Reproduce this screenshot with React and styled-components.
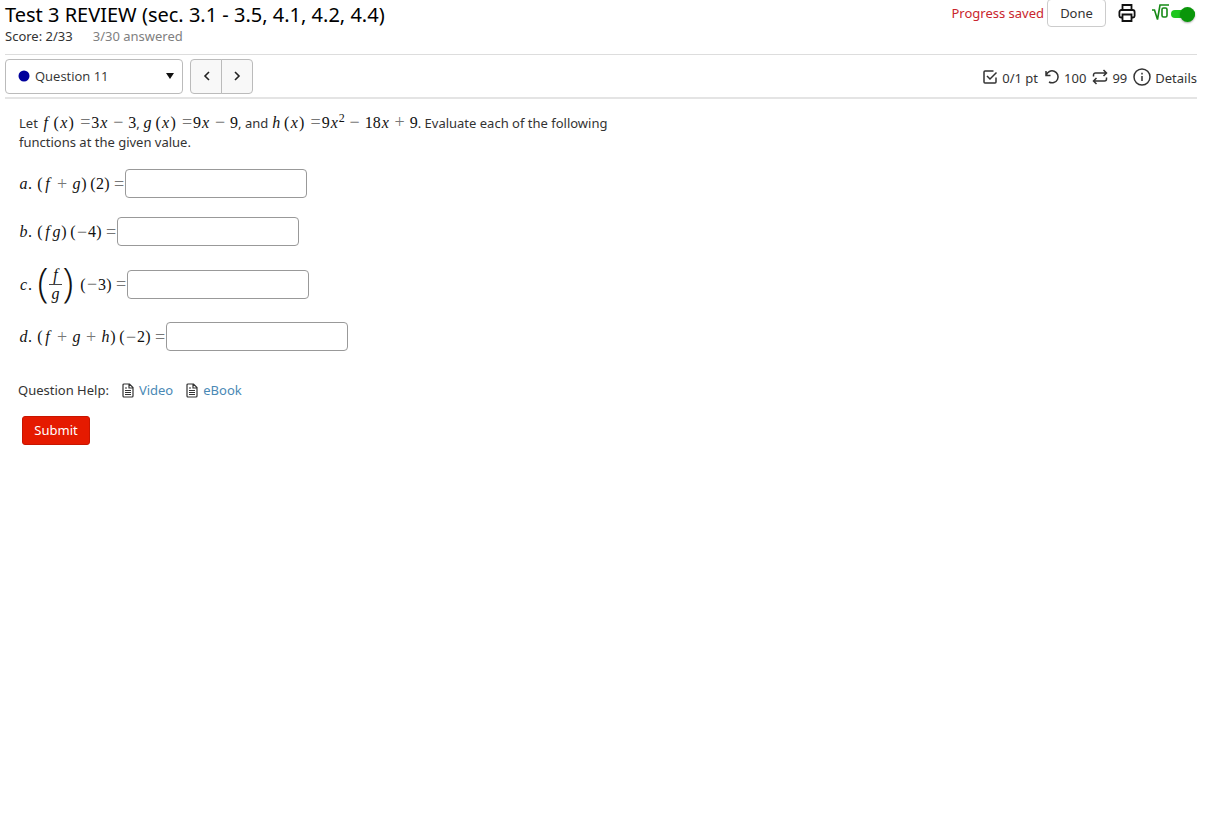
import React from "react";
import styled, { createGlobalStyle } from "styled-components";

const GlobalStyle = createGlobalStyle`
  *, *::before, *::after { box-sizing: border-box; }
  body {
    margin: 0;
    background: #fff;
    color: #333;
    font: 13px/19px "Noto Sans", "Open Sans", sans-serif;
  }
  button, input, select { font: inherit; color: inherit; }
`;

const Page = styled.div`
  padding: 0 12px 0 5px;
`;

const Header = styled.header`
  display: flex;
  justify-content: space-between;
  align-items: flex-start;
  height: 54px;
`;

const Title = styled.h1`
  margin: 0;
  padding-top: 2px;
  font-size: 20px;
  line-height: 26px;
  font-weight: 400;
  color: #000;
`;

const Scores = styled.div`
  display: flex;
  gap: 20px;
  line-height: 17px;
`;

const Answered = styled.span`
  color: #808080;
`;

const HeaderTools = styled.div`
  display: flex;
  align-items: center;
  height: 26px;
`;

const Saved = styled.span`
  margin-right: 3px;
  color: #c9252d;
`;

const DoneButton = styled.button`
  width: 59px;
  height: 28px;
  padding: 0;
  border: 1px solid #ccc;
  border-radius: 4px;
  background: #fff;
`;

const IconButton = styled.button`
  display: flex;
  margin-left: 12px;
  padding: 0;
  border: 0;
  background: none;
  color: #111;
`;

const MathToggle = styled.label`
  display: flex;
  align-items: center;
  gap: 2px;
  margin: 0 2px 0 16px;
`;

const Switch = styled.input`
  appearance: none;
  display: flex;
  align-items: center;
  justify-content: flex-end;
  width: 24px;
  height: 8px;
  margin: 2px 0 0;
  border-radius: 4px;
  background: #1fc71f;
  &::before {
    content: "";
    width: 15px;
    height: 15px;
    flex: none;
    border-radius: 50%;
    background: #0a960a;
    box-shadow: 0 1px 2px #0005;
  }
`;

const Toolbar = styled.nav`
  display: flex;
  justify-content: space-between;
  align-items: center;
  height: 45px;
  border-top: 1px solid #ddd;
  border-bottom: 2px solid #e4e4e4;
`;

const Group = styled.div`
  display: flex;
  align-items: center;
`;

const QuestionPicker = styled.label`
  display: flex;
  align-items: center;
  gap: 5px;
  width: 178px;
  height: 35px;
  margin-right: 7px;
  padding: 0 8px 0 12px;
  border: 1px solid #bbb;
  border-radius: 4px;
  font-family: "Open Sans", "Noto Sans", sans-serif;
`;

const PickerSelect = styled.select`
  appearance: none;
  flex: 1;
  padding: 0;
  border: 0;
  background: transparent;
`;

const StepButton = styled.button`
  display: flex;
  align-items: center;
  justify-content: center;
  width: 32px;
  height: 35px;
  padding: 0;
  border: 1px solid #bbb;
  background: #f8f8f8;
  border-radius: ${(p) => (p.$side === "left" ? "4px 0 0 4px" : "0 4px 4px 0")};
  margin-left: ${(p) => (p.$side === "left" ? "0" : "-1px")};
`;

const Stats = styled.div`
  display: flex;
  align-items: center;
  gap: 6px;
  padding-top: 4px;
  svg { margin-bottom: 2px; }
`;

const Stat = styled.span`
  display: flex;
  align-items: center;
  gap: 4px;
`;

const DetailsButton = styled.button`
  display: flex;
  align-items: center;
  gap: 4px;
  padding: 0;
  border: 0;
  background: none;
`;

const Question = styled.main`
  padding: 14px;
`;

const Prompt = styled.p`
  max-width: 610px;
  margin: 0 0 17px;
`;

const Answer = styled.div`
  display: flex;
  align-items: center;
  height: ${(p) => (p.$tall ? "38px" : "29px")};
  margin-bottom: 19px;
`;

const AnswerInput = styled.input`
  width: 182px;
  height: 29px;
  padding: 0 8px;
  border: 1px solid #999;
  border-radius: 4px;
  background: #fff;
`;

const Formula = styled.span`
  font-family: "Liberation Serif", serif;
  font-size: 16px;
  line-height: 19px;
  color: #111;
  white-space: nowrap;
`;

const FormulaLabel = styled(Formula).attrs({ as: "label" })`
  display: flex;
  align-items: center;
`;

const Variable = styled.i`
  display: inline-block;
  min-width: 9px;
  text-align: center;
`;

const Paren = styled.span`
  display: inline-block;
  width: 6px;
  text-align: center;
`;

const Operator = styled.span`
  display: inline-block;
  width: 12px;
  margin: 0 ${(p) => (p.$wide ? "4px" : "0")};
  color: #777;
  font-size: 18px;
  line-height: 16px;
  text-align: center;
`;

const Space = styled.span`
  display: inline-block;
  width: ${(p) => (p.$wide ? "5px" : "3px")};
`;

const Power = styled.sup`
  font-size: 12px;
  line-height: 0;
`;

const BigParen = styled.span`
  width: 12px;
  font-family: "Open Sans", sans-serif;
  font-weight: 300;
  font-size: 40px;
  line-height: 32px;
  padding-bottom: 4px;
  text-align: center;
`;

const Fraction = styled.span`
  display: flex;
  flex-direction: column;
  align-items: center;
  width: 13px;
  line-height: 18px;
`;

const Numerator = styled.i`
  align-self: stretch;
  border-bottom: 1px solid #444;
  text-align: center;
`;

const Help = styled.div`
  display: flex;
  align-items: center;
  margin: 30px 0 16px -1px;
`;

const HelpLink = styled.a`
  display: flex;
  align-items: center;
  gap: 5px;
  margin-left: 13px;
  color: #4a89b5;
  text-decoration: none;
`;

const SubmitButton = styled.button`
  width: 68px;
  height: 29px;
  margin-left: 3px;
  padding: 0;
  border: 1px solid #c81500;
  border-radius: 3px;
  background: #e51a00;
  color: #fff;
`;

const Icon = ({ size = 16, children, width = 1.5, box = 16 }) => (
  <svg
    width={size}
    height={size}
    viewBox={`0 0 ${box} ${box}`}
    fill="none"
    stroke="currentColor"
    strokeWidth={width}
    aria-hidden="true"
  >
    {children}
  </svg>
);

const PrintIcon = () => (
  <Icon size={18} box={18} width={1.8}>
    <path d="M4.500 6V1h9v5M4.500 13.500H3A1.600 1.600 0 0 1 1.400 12V8A2 2 0 0 1 3.400 6h11.200a2 2 0 0 1 2 2v4a1.600 1.600 0 0 1-1.600 1.500h-1.500M4.500 10.500h9V17h-9z" />
  </Icon>
);

const RootIcon = () => (
  <svg width="17" height="18" viewBox="0 0 17 18" fill="none" stroke="#168a16" strokeWidth="1.600" aria-hidden="true">
    <path d="M0 6h2.500l3 9.500L8 1h9" />
    <rect x="10" y="4" width="5" height="9" rx="1.500" />
  </svg>
);

const CheckIcon = () => (
  <Icon>
    <path d="M11.500 2H3a1 1 0 0 0-1 1v10a1 1 0 0 0 1 1h10a1 1 0 0 0 1-1V8.500M5 7l3 3 6.500-6.500" />
  </Icon>
);

const UndoIcon = () => (
  <Icon>
    <path d="M2 2v4.500h4.500M2.300 6.200A6 6 0 1 1 5 13" />
  </Icon>
);

const RepeatIcon = () => (
  <Icon>
    <path d="M11.500 1l3 3-3 3M1.500 7.500V6a2 2 0 0 1 2-2h11M4.500 15l-3-3 3-3M14.500 8.500V10a2 2 0 0 1-2 2h-11" />
  </Icon>
);

const InfoIcon = () => (
  <Icon size={18} box={18}>
    <circle cx="9" cy="9" r="8" />
    <path d="M9 8v5M9 4.800v1.700" />
  </Icon>
);

const DocIcon = () => (
  <svg width="12" height="15" viewBox="0 0 12 15" fill="none" stroke="#333" strokeWidth="1.200" aria-hidden="true">
    <path d="M2 1h5.500L11 4.500V13a1 1 0 0 1-1 1H2a1 1 0 0 1-1-1V2a1 1 0 0 1 1-1zM7 1v4h4M3 7.500h6M3 9.500h6M3 11.500h6M3 5h2" />
  </svg>
);

const Arg = ({ children }) => (
  <>
    <Paren>(</Paren>
    {children}
    <Paren>)</Paren>
  </>
);

const FunctionOfX = ({ name }) => (
  <>
    <Variable>{name}</Variable>
    <Space />
    <Arg>
      <Variable>x</Variable>
    </Arg>
    <Space $wide />
    <Operator>=</Operator>
  </>
);

const AnswerRow = ({ id, tall, children, value }) => (
  <Answer $tall={tall}>
    <FormulaLabel htmlFor={id}>
      <Variable>{id}</Variable>.<Space $wide />
      {children}
      <Space />
      <Arg>{value}</Arg>
      <Space />
      <Operator>=</Operator>
    </FormulaLabel>
    <AnswerInput id={id} type="text" />
  </Answer>
);

const Negative = ({ children }) => (
  <>
    <Operator>−</Operator>
    {children}
  </>
);

export default function App() {
  return (
    <Page>
      <GlobalStyle />
      <Header>
        <div>
          <Title>Test 3 REVIEW (sec. 3.1 - 3.5, 4.1, 4.2, 4.4)</Title>
          <Scores>
            <span>Score: 2/33</span>
            <Answered>3/30 answered</Answered>
          </Scores>
        </div>
        <HeaderTools>
          <Saved>Progress saved</Saved>
          <DoneButton>Done</DoneButton>
          <IconButton aria-label="Print">
            <PrintIcon />
          </IconButton>
          <MathToggle>
            <RootIcon />
            <Switch type="checkbox" role="switch" aria-label="Equation editor" defaultChecked />
          </MathToggle>
        </HeaderTools>
      </Header>
      <Toolbar>
        <Group>
          <QuestionPicker>
            <svg width="12" height="12" aria-hidden="true">
              <circle cx="6" cy="6" r="5.500" fill="#00009c" />
            </svg>
            <PickerSelect aria-label="Question">
              <option>Question 11</option>
            </PickerSelect>
            <svg width="8" height="6" aria-hidden="true">
              <path d="M0 0h8L4 6z" fill="#111" />
            </svg>
          </QuestionPicker>
          <StepButton $side="left" aria-label="Previous question">
            <svg width="7" height="10" fill="none" stroke="#222" strokeWidth="1.600" aria-hidden="true">
              <path d="M6 1L2 5l4 4" />
            </svg>
          </StepButton>
          <StepButton $side="right" aria-label="Next question">
            <svg width="7" height="10" fill="none" stroke="#222" strokeWidth="1.600" aria-hidden="true">
              <path d="M1 1l4 4-4 4" />
            </svg>
          </StepButton>
        </Group>
        <Stats>
          <Stat><CheckIcon />0/1 pt</Stat>
          <Stat><UndoIcon />100</Stat>
          <Stat><RepeatIcon />99</Stat>
          <DetailsButton><InfoIcon />Details</DetailsButton>
        </Stats>
      </Toolbar>
      <Question>
        <Prompt>
          Let{" "}
          <Formula>
            <FunctionOfX name="f" />3<Variable>x</Variable>
            <Operator $wide>−</Operator>3
          </Formula>
          ,{" "}
          <Formula>
            <FunctionOfX name="g" />9<Variable>x</Variable>
            <Operator $wide>−</Operator>9
          </Formula>
          , and{" "}
          <Formula>
            <FunctionOfX name="h" />9<Variable>x</Variable>
            <Power>2</Power>
            <Operator $wide>−</Operator>18<Variable>x</Variable>
            <Operator $wide>+</Operator>9
          </Formula>
          . Evaluate each of the following
          <br />
          functions at the given value.
        </Prompt>
        <AnswerRow id="a" value="2">
          <Arg>
            <Variable>f</Variable>
            <Operator $wide>+</Operator>
            <Variable>g</Variable>
          </Arg>
        </AnswerRow>
        <AnswerRow id="b" value={<Negative>4</Negative>}>
          <Arg>
            <Variable>f</Variable>
            <Variable>g</Variable>
          </Arg>
        </AnswerRow>
        <AnswerRow id="c" tall value={<Negative>3</Negative>}>
          <BigParen>(</BigParen>
          <Fraction>
            <Numerator>f</Numerator>
            <i>g</i>
          </Fraction>
          <BigParen>)</BigParen>
          <Space />
        </AnswerRow>
        <AnswerRow id="d" value={<Negative>2</Negative>}>
          <Arg>
            <Variable>f</Variable>
            <Operator $wide>+</Operator>
            <Variable>g</Variable>
            <Operator $wide>+</Operator>
            <Variable>h</Variable>
          </Arg>
        </AnswerRow>
        <Help>
          Question Help:
          <HelpLink href="#video"><DocIcon />Video</HelpLink>
          <HelpLink href="#ebook"><DocIcon />eBook</HelpLink>
        </Help>
        <SubmitButton type="submit">Submit</SubmitButton>
      </Question>
    </Page>
  );
}
